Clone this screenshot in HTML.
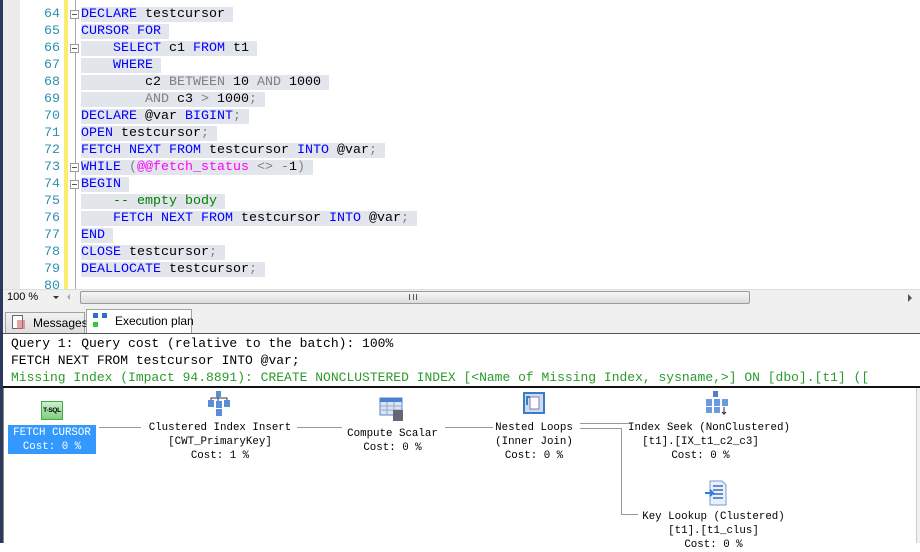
<!DOCTYPE html>
<html><head><style>
*{margin:0;padding:0;box-sizing:border-box}
body{width:920px;height:543px;overflow:hidden;background:#fff;position:relative;font-family:"Liberation Mono",monospace}
.a{position:absolute}
.ln{position:absolute;left:20px;width:40px;text-align:right;color:#2b91af;font-size:13.33px;line-height:17px}
.cl{position:absolute;left:81px;font-size:13.33px;line-height:17px;white-space:pre;color:#000}
.cl span.s{background:#e2e6ec}
.k{color:#0000ff}.g{color:#808080}.m{color:#ff00ff}.c{color:#008000}
.pl{position:absolute;font-size:10.8px;line-height:14px;text-align:center;white-space:pre;color:#000}
.box{position:absolute;width:9px;height:9px;border:1px solid #999;background:#fff;left:70px}
.box:after{content:"";position:absolute;left:1px;top:3px;width:5px;height:1px;background:#555}
</style></head><body>
<div class="a" style="left:0;top:0;width:3px;height:543px;background:#2b3a5a"></div>
<div class="a" style="left:3px;top:0;width:17px;height:289px;background:#ececec"></div>
<div class="a" style="left:64px;top:0;width:4px;height:289px;background:#f7ef6c"></div>
<div class="a" style="left:75px;top:0;width:1px;height:289px;background:#aaa"></div>

<div class="ln" style="top:-11px">63</div>
<div class="ln" style="top:6px">64</div><div class="ln" style="top:23px">65</div><div class="ln" style="top:40px">66</div><div class="ln" style="top:57px">67</div><div class="ln" style="top:74px">68</div><div class="ln" style="top:91px">69</div><div class="ln" style="top:108px">70</div><div class="ln" style="top:125px">71</div><div class="ln" style="top:142px">72</div><div class="ln" style="top:159px">73</div><div class="ln" style="top:176px">74</div><div class="ln" style="top:193px">75</div><div class="ln" style="top:210px">76</div><div class="ln" style="top:227px">77</div><div class="ln" style="top:244px">78</div><div class="ln" style="top:261px">79</div><div class="ln" style="top:278px">80</div>
<div class="box" style="top:10px"></div><div class="box" style="top:44px"></div><div class="box" style="top:163px"></div><div class="box" style="top:180px"></div>

<div class="cl" style="top:6px"><span class="s"><span class="k">DECLARE</span> testcursor </span></div>
<div class="cl" style="top:23px"><span class="s"><span class="k">CURSOR FOR</span> </span></div>
<div class="cl" style="top:40px"><span class="s">    <span class="k">SELECT</span> c1 <span class="k">FROM</span> t1 </span></div>
<div class="cl" style="top:57px"><span class="s">    <span class="k">WHERE</span> </span></div>
<div class="cl" style="top:74px"><span class="s">        c2 <span class="g">BETWEEN</span> 10 <span class="g">AND</span> 1000 </span></div>
<div class="cl" style="top:91px"><span class="s">        <span class="g">AND</span> c3 <span class="g">&gt;</span> 1000<span class="g">;</span> </span></div>
<div class="cl" style="top:108px"><span class="s"><span class="k">DECLARE</span> @var <span class="k">BIGINT</span><span class="g">;</span> </span></div>
<div class="cl" style="top:125px"><span class="s"><span class="k">OPEN</span> testcursor<span class="g">;</span> </span></div>
<div class="cl" style="top:142px"><span class="s"><span class="k">FETCH NEXT FROM</span> testcursor <span class="k">INTO</span> @var<span class="g">;</span> </span></div>
<div class="cl" style="top:159px"><span class="s"><span class="k">WHILE</span> <span class="g">(</span><span class="m">@@fetch_status</span> <span class="g">&lt;&gt; -</span>1<span class="g">)</span> </span></div>
<div class="cl" style="top:176px"><span class="s"><span class="k">BEGIN</span> </span></div>
<div class="cl" style="top:193px"><span class="s">    <span class="c">-- empty body</span> </span></div>
<div class="cl" style="top:210px"><span class="s">    <span class="k">FETCH NEXT FROM</span> testcursor <span class="k">INTO</span> @var<span class="g">;</span> </span></div>
<div class="cl" style="top:227px"><span class="s"><span class="k">END</span> </span></div>
<div class="cl" style="top:244px"><span class="s"><span class="k">CLOSE</span> testcursor<span class="g">;</span> </span></div>
<div class="cl" style="top:261px"><span class="s"><span class="k">DEALLOCATE</span> testcursor<span class="g">;</span> </span></div>

<!-- hscroll bar -->
<div class="a" style="left:3px;top:289px;width:917px;height:17px;background:#f0f0f0;border-top:1px solid #ddd"></div>
<div class="a" style="left:7px;top:291px;font-family:'Liberation Sans',sans-serif;font-size:11px;color:#000">100 %</div>
<div class="a" style="left:53px;top:296px;border:3px solid transparent;border-top:3px solid #333"></div>
<div class="a" style="left:67px;top:294px;border:3px solid transparent;border-right:3px solid #aaa;border-left:0"></div>
<div class="a" style="left:80px;top:291px;width:670px;height:13px;border:1px solid #9a9a9a;border-radius:2px;background:linear-gradient(#f6f6f6,#dcdcdc)"></div>
<div class="a" style="left:409px;top:294px;width:8px;height:6px;border-left:1px solid #555;border-right:1px solid #555"></div>
<div class="a" style="left:413px;top:294px;width:1px;height:6px;background:#555"></div>
<div class="a" style="left:908px;top:294px;border:4px solid transparent;border-left:4px solid #555;border-right:0"></div>
<!-- tabs -->
<div class="a" style="left:3px;top:306px;width:917px;height:27px;background:#f0f0f0"></div>
<div class="a" style="left:5px;top:312px;width:80px;height:21px;border:1px solid #a0a0a0;border-bottom:0;background:linear-gradient(#f2f2f2,#dedede)"></div>
<div class="a" style="left:12px;top:315px;width:11px;height:14px;border:1px solid #667;background:#fff"></div>
<div class="a" style="left:17px;top:320px;width:8px;height:9px;background:#c66;opacity:.6"></div>
<div class="a" style="left:33px;top:316px;font-family:'Liberation Sans',sans-serif;font-size:12px">Messages</div>
<div class="a" style="left:86px;top:309px;width:106px;height:25px;border:1px solid #a0a0a0;border-bottom:0;background:#fff"></div>
<div class="a" style="left:93px;top:313px;width:5px;height:5px;background:#2a6fd0"></div>
<div class="a" style="left:102px;top:313px;width:5px;height:5px;background:#2a6fd0"></div>
<div class="a" style="left:93px;top:322px;width:5px;height:5px;background:#3c3"></div>
<div class="a" style="left:115px;top:314px;font-family:'Liberation Sans',sans-serif;font-size:12px">Execution plan</div>
<div class="a" style="left:3px;top:333px;width:917px;height:1px;background:#555"></div>
<div class="a" style="left:11px;top:335px;font-size:13px;line-height:17px;white-space:pre">Query 1: Query cost (relative to the batch): 100%
FETCH NEXT FROM testcursor INTO @var;
<span style="color:#2a9b2a">Missing Index (Impact 94.8891): CREATE NONCLUSTERED INDEX [&lt;Name of Missing Index, sysname,&gt;] ON [dbo].[t1] ([</span></div>
<div class="a" style="left:3px;top:386px;width:917px;height:2px;background:#111"></div>
<div class="a" style="left:3px;top:388px;width:1px;height:155px;background:#888"></div>
<div class="a" style="left:916px;top:388px;width:4px;height:155px;background:#f0f0f0;border-left:1px solid #ccc"></div>

<!-- plan -->
<div class="a" style="left:41px;top:401px;width:22px;height:19px;background:linear-gradient(#cfeecf,#7ecf7e);border:1px solid #4a4;font-family:'Liberation Sans',sans-serif;font-size:6.5px;font-weight:bold;text-align:center;line-height:17px;letter-spacing:-0.3px">T-SQL</div>
<div class="a" style="left:8px;top:425px;width:88px;height:29px;background:#3399ff"></div>
<div class="pl" style="left:8px;top:426px;width:88px;color:#fff">FETCH CURSOR
Cost: 0 %</div>
<div class="a" style="left:99px;top:427px;width:42px;height:1px;background:#999"></div>
<div class="pl" style="left:140px;top:421px;width:160px">Clustered Index Insert
[CWT_PrimaryKey]
Cost: 1 %</div>
<div class="a" style="left:297px;top:427px;width:45px;height:1px;background:#999"></div>
<div class="pl" style="left:335px;top:427px;width:115px">Compute Scalar
Cost: 0 %</div>
<div class="a" style="left:445px;top:427px;width:48px;height:1px;background:#999"></div>
<div class="pl" style="left:488px;top:421px;width:92px">Nested Loops
(Inner Join)
Cost: 0 %</div>
<div class="a" style="left:580px;top:423px;width:50px;height:1px;background:#999"></div>
<div class="a" style="left:580px;top:428px;width:42px;height:1px;background:#999"></div>
<div class="a" style="left:621px;top:428px;width:1px;height:87px;background:#999"></div>
<div class="a" style="left:621px;top:514px;width:17px;height:1px;background:#999"></div>
<div class="pl" style="left:628px;top:421px;width:145px">Index Seek (NonClustered)
[t1].[IX_t1_c2_c3]
Cost: 0 %</div>
<div class="pl" style="left:636px;top:510px;width:155px">Key Lookup (Clustered)
[t1].[t1_clus]
Cost: 0 %</div>
<!-- icons -->
<svg class="a" style="left:205px;top:390px" width="28" height="28"><rect x="11" y="1" width="5" height="6" fill="#5a8fd8"/><rect x="3" y="10" width="6" height="7" fill="#5a8fd8"/><rect x="11" y="11" width="6" height="7" fill="#5a8fd8"/><rect x="19" y="10" width="6" height="7" fill="#5a8fd8"/><rect x="11" y="19" width="6" height="7" fill="#5a8fd8"/><path d="M13 7v4M6 10V8h16v2" stroke="#335" fill="none"/></svg>
<svg class="a" style="left:378px;top:396px" width="28" height="28"><rect x="2" y="2" width="22" height="17" fill="#d7e6f8" stroke="#5b84c4"/><rect x="2" y="2" width="22" height="4" fill="#4b7fd0"/><path d="M3 10h20M3 14h20M9 6v13M16 6v13" stroke="#9ab"/><rect x="15" y="14" width="10" height="11" fill="#667" /></svg>
<svg class="a" style="left:522px;top:391px" width="24" height="24"><rect x="2" y="2" width="20" height="20" fill="#cde" stroke="#3a7cc8" stroke-width="2"/><rect x="8" y="6" width="9" height="12" fill="#fff" stroke="#8a7ab0"/><path d="M5 14V6h3" stroke="#3a7cc8" fill="none" stroke-width="2"/></svg>
<svg class="a" style="left:703px;top:390px" width="26" height="28"><rect x="10" y="1" width="5" height="6" fill="#4d7fd0"/><rect x="3" y="9" width="6" height="7" fill="#6a9ae0"/><rect x="11" y="9" width="6" height="7" fill="#6a9ae0"/><rect x="19" y="9" width="6" height="7" fill="#6a9ae0"/><rect x="3" y="17" width="6" height="6" fill="#6a9ae0"/><rect x="11" y="17" width="6" height="6" fill="#6a9ae0"/><path d="M21 17v7l-2-2M21 24l2-2" stroke="#225" fill="none"/></svg>
<svg class="a" style="left:704px;top:480px" width="24" height="26"><path d="M6 1h12l4 4v20H6z" fill="#e8f0fb" stroke="#7a9bd0"/><path d="M9 6h10M9 10h10M9 14h10M9 18h10" stroke="#6a8cc8" stroke-width="2"/><path d="M1 13h8l-3-3M9 13l-3 3" stroke="#2a7fd8" stroke-width="2" fill="none"/></svg>
</body></html>
